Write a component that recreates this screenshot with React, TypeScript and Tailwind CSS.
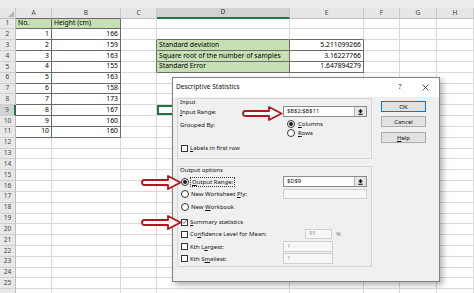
import React from "react";

const COLW = ["w-[16px]", "w-[36px]", "w-[69px]", "w-[36px]", "w-[133px]", "w-[74px]", "w-[36px]", "w-[37px]", "w-[37px]"];
const LETTERS = ["", "A", "B", "C", "D", "E", "F", "G", "H"];
const HEIGHTS = [166, 159, 163, 155, 163, 158, 173, 167, 160, 160];

function inTable(r: number, c: number) {
  return ((c === 1 || c === 2) && r >= 1 && r <= 11) || ((c === 4 || c === 5) && r >= 3 && r <= 5);
}

function content(r: number, c: number): { text: string; right: boolean } | null {
  if (r === 1 && c === 1) return { text: "No.", right: false };
  if (r === 1 && c === 2) return { text: "Height (cm)", right: false };
  if (r >= 2 && r <= 11 && c === 1) return { text: String(r - 1), right: true };
  if (r >= 2 && r <= 11 && c === 2) return { text: String(HEIGHTS[r - 2]), right: true };
  if (c === 4 && r === 3) return { text: "Standard deviation", right: false };
  if (c === 4 && r === 4) return { text: "Square root of the number of samples", right: false };
  if (c === 4 && r === 5) return { text: "Standard Error", right: false };
  if (c === 5 && r === 3) return { text: "5.211099266", right: true };
  if (c === 5 && r === 4) return { text: "3.16227766", right: true };
  if (c === 5 && r === 5) return { text: "1.647894279", right: true };
  return null;
}

function Cell({ r, c }: { r: number; c: number }) {
  const rd = inTable(r, c) || inTable(r, c + 1);
  const bd = inTable(r, c) || inTable(r + 1, c);
  const green = (r === 1 && (c === 1 || c === 2)) || (r >= 3 && r <= 5 && c === 4);
  const sel = r === 9 && c === 4;
  const ct = content(r, c);
  return (
    <div
      className={`${COLW[c]} h-full shrink-0 flex items-center border-r border-b px-[2px] overflow-hidden whitespace-nowrap ${
        rd ? "border-r-[#6b6b6b]" : "border-r-[#dadada]"
      } ${bd ? "border-b-[#6b6b6b]" : "border-b-[#dadada]"} ${green ? "bg-[#c6e0b4]" : "bg-white"} ${
        ct && ct.right ? "justify-end" : "justify-start"
      } ${sel ? "shadow-[inset_0_0_0_2px_#217346]" : ""}`}
    >
      {ct && <span className="text-[6.8px] leading-none text-black">{ct.text}</span>}
    </div>
  );
}

function RowHeader({ r }: { r: number }) {
  const sel = r === 9;
  return (
    <div
      className={`${COLW[0]} h-full shrink-0 flex items-center justify-center border-b border-b-[#d0d0d0] ${
        sel ? "bg-[#d2d2d2] border-r-2 border-r-[#217346] text-[#217346]" : "bg-[#e8e8e8] border-r border-r-[#bdbdbd] text-[#444]"
      }`}
    >
      {r <= 25 && <span className="text-[6.6px] leading-none">{r}</span>}
    </div>
  );
}

function Check({ checked }: { checked?: boolean }) {
  return (
    <span className="w-[7px] h-[7px] border border-[#333] bg-white flex items-center justify-center shrink-0">
      {checked && (
        <svg width="6" height="6" viewBox="0 0 6 6">
          <path d="M0.7 3.1 L2.3 4.7 L5.4 1.1" stroke="#222" strokeWidth="0.9" fill="none" />
        </svg>
      )}
    </span>
  );
}

function Radio({ on }: { on?: boolean }) {
  return (
    <span className="w-[8px] h-[8px] rounded-full border border-[#333] bg-white flex items-center justify-center shrink-0">
      {on && <span className="w-[4px] h-[4px] rounded-full bg-[#1a1a1a]" />}
    </span>
  );
}

function RefBtn() {
  return (
    <span className="w-[12px] h-full border-l border-[#b5b5b5] bg-[#e6e6e6] flex items-center justify-center shrink-0">
      <svg width="5" height="6" viewBox="0 0 5 6">
        <path d="M2.5 0 L5 2.6 H3.4 V4 H1.6 V2.6 H0 Z" fill="#111" />
        <rect x="0.3" y="4.7" width="4.4" height="1.1" fill="#111" />
      </svg>
    </span>
  );
}

function Field({ value, refBtn, disabled, w }: { value?: string; refBtn?: boolean; disabled?: boolean; w: string }) {
  return (
    <div
      className={`${w} h-full flex items-stretch border ${
        disabled ? "border-[#cfcfcf] bg-[#f7f7f7] text-[#9a9a9a]" : "border-[#8c8c8c] bg-white text-[#111]"
      }`}
    >
      <span className="flex-1 flex items-center pl-[3px] text-[5.8px] leading-none">{value}</span>
      {refBtn && <RefBtn />}
    </div>
  );
}

function U({ children }: { children: React.ReactNode }) {
  return <span className="underline underline-offset-[1px] decoration-[0.5px]">{children}</span>;
}

function Btn({ children, primary, cls }: { children: React.ReactNode; primary?: boolean; cls: string }) {
  return (
    <div
      className={`${cls} w-[45px] flex items-center justify-center bg-[#e1e1e1] border text-[6px] leading-none text-[#111] ${
        primary ? "border-[#0078d7]" : "border-[#adadad]"
      }`}
    >
      {children}
    </div>
  );
}

function Arrow({ cls }: { cls: string }) {
  return (
    <svg className={cls} width="41" height="15" viewBox="0 0 41 15">
      <path
        d="M3.5 5 H27 V1 L39.5 7.5 L27 14 V10 H3.5 A2.5 2.5 0 0 1 3.5 5 Z"
        fill="white"
        stroke="#b3171d"
        strokeWidth="1.8"
        strokeLinejoin="round"
      />
    </svg>
  );
}

function Dialog() {
  return (
    <div className="absolute left-[172px] top-[77px] w-[268px] h-[205px] bg-[#f0f0f0] border border-[#808080] shadow-[3px_3px_6px_rgba(0,0,0,0.3)] flex flex-col text-[6px] leading-none text-[#111]">
      <div className="h-[19px] shrink-0 bg-white flex items-center pl-[3px]">
        <span className="text-[6.6px] text-[#111]">Descriptive Statistics</span>
        <span className="ml-auto w-[10px] text-center text-[6.5px] text-[#333]">?</span>
        <span className="ml-[14px] w-[12px] flex justify-center mr-[8px]">
          <svg width="7" height="7" viewBox="0 0 7 7">
            <path d="M0.5 0.5 L6.5 6.5 M6.5 0.5 L0.5 6.5" stroke="#333" strokeWidth="0.8" />
          </svg>
        </span>
      </div>
      <div className="flex pl-[4px] pt-[1px]">
        <div className="w-[195px] flex flex-col">
          {/* Input group */}
          <div className="h-[61px] border border-[#d5d5d5] flex flex-col pl-[2px]">
            <div className="h-[5px] flex items-center">Input</div>
            <div className="mt-[2px] h-[11px] flex items-center">
              <span className="w-[103px]">
                <U>I</U>nput Range:
              </span>
              <Field w="w-[84px]" value="$B$2:$B$11" refBtn />
            </div>
            <div className="mt-[2px] flex">
              <span className="w-[107px] h-[9px] mt-[1px] flex items-center">Grouped By:</span>
              <div className="flex flex-col">
                <div className="h-[9px] flex items-center gap-[3px]">
                  <Radio on />
                  <span>
                    <U>C</U>olumns
                  </span>
                </div>
                <div className="h-[9px] flex items-center gap-[3px]">
                  <Radio />
                  <span>
                    <U>R</U>ows
                  </span>
                </div>
              </div>
            </div>
            <div className="mt-[6px] h-[10px] flex items-center gap-[2px] pl-[1px]">
              <Check />
              <span>
                <U>L</U>abels in first row
              </span>
            </div>
          </div>
          {/* Output group */}
          <div className="mt-[7px] h-[101px] border border-[#d5d5d5] flex flex-col pl-[2px]">
            <div className="h-[5px] flex items-center">Output options</div>
            <div className="mt-[4px] h-[11px] flex items-center">
              <div className="w-[103px] flex items-center gap-[1px] pl-[1px]">
                <Radio on />
                <span className="border border-dotted border-[#333] px-[1px] py-[1px]">
                  <U>O</U>utput Range:
                </span>
              </div>
              <Field w="w-[84px]" value="$D$9" refBtn />
            </div>
            <div className="mt-[2px] h-[10px] flex items-center">
              <div className="w-[103px] flex items-center gap-[2px] pl-[1px]">
                <Radio />
                <span>
                  New Worksheet <U>P</U>ly:
                </span>
              </div>
              <Field w="w-[84px]" disabled />
            </div>
            <div className="mt-[3px] h-[10px] flex items-center gap-[2px] pl-[1px]">
              <Radio />
              <span>
                New <U>W</U>orkbook
              </span>
            </div>
            <div className="mt-[5px] h-[10px] flex items-center gap-[2px] pl-[1px]">
              <Check checked />
              <span>
                <U>S</U>ummary statistics
              </span>
            </div>
            <div className="mt-[2px] h-[10px] flex items-center">
              <div className="w-[125px] flex items-center gap-[2px] pl-[1px]">
                <Check />
                <span>
                  Co<U>n</U>fidence Level for Mean:
                </span>
              </div>
              <Field w="w-[27px]" value="95" disabled />
              <span className="ml-[4px] text-[#777]">%</span>
            </div>
            <div className="mt-[2px] h-[11px] flex items-center">
              <div className="w-[103px] flex items-center gap-[2px] pl-[1px]">
                <Check />
                <span>
                  Kth L<U>a</U>rgest:
                </span>
              </div>
              <Field w="w-[50px]" value="1" disabled />
            </div>
            <div className="mt-[1px] h-[11px] flex items-center">
              <div className="w-[103px] flex items-center gap-[2px] pl-[1px]">
                <Check />
                <span>
                  Kth S<U>m</U>allest:
                </span>
              </div>
              <Field w="w-[50px]" value="1" disabled />
            </div>
          </div>
        </div>
        <div className="ml-[9px] flex flex-col pt-[3px]">
          <Btn cls="h-[11px]" primary>
            OK
          </Btn>
          <Btn cls="h-[11px] mt-[4px]">Cancel</Btn>
          <Btn cls="h-[11px] mt-[5px]">
            <U>H</U>elp
          </Btn>
        </div>
      </div>
    </div>
  );
}

export default function App() {
  const rows = Array.from({ length: 26 }, (_, i) => i + 1);
  return (
    <div className="relative w-[474px] h-[293px] overflow-hidden bg-white font-['Noto_Sans',sans-serif]">
      <div className="h-[8px] bg-[#ececec]" />
      <div className="h-[10.6px] flex">
        {LETTERS.map((l, c) => (
          <div
            key={c}
            className={`${COLW[c]} h-full shrink-0 flex items-center justify-center border-r border-r-[#c8c8c8] ${
              c === 4
                ? "bg-[#d2d2d2] border-b-2 border-b-[#217346] text-[#333]"
                : inTable(1, c)
                ? "bg-[#e6e6e6] border-b border-b-[#6b6b6b] text-[#444]"
                : "bg-[#e6e6e6] border-b border-b-[#bdbdbd] text-[#444]"
            }`}
          >
            {c === 0 ? (
              <svg width="6" height="6" viewBox="0 0 6 6" className="self-end ml-auto mr-[1px] mb-[1px]">
                <path d="M6 0 V6 H0 Z" fill="#b4b4b4" />
              </svg>
            ) : (
              <span className="text-[6.6px] leading-none">{l}</span>
            )}
          </div>
        ))}
      </div>
      {rows.map((r) => (
        <div key={r} className="h-[10.83px] flex">
          <RowHeader r={r} />
          {[1, 2, 3, 4, 5, 6, 7, 8].map((c) => (
            <Cell key={c} r={r} c={c} />
          ))}
        </div>
      ))}
      <Dialog />
      <Arrow cls="absolute left-[242px] top-[106px]" />
      <Arrow cls="absolute left-[141px] top-[175px]" />
      <Arrow cls="absolute left-[141px] top-[215px]" />
    </div>
  );
}
